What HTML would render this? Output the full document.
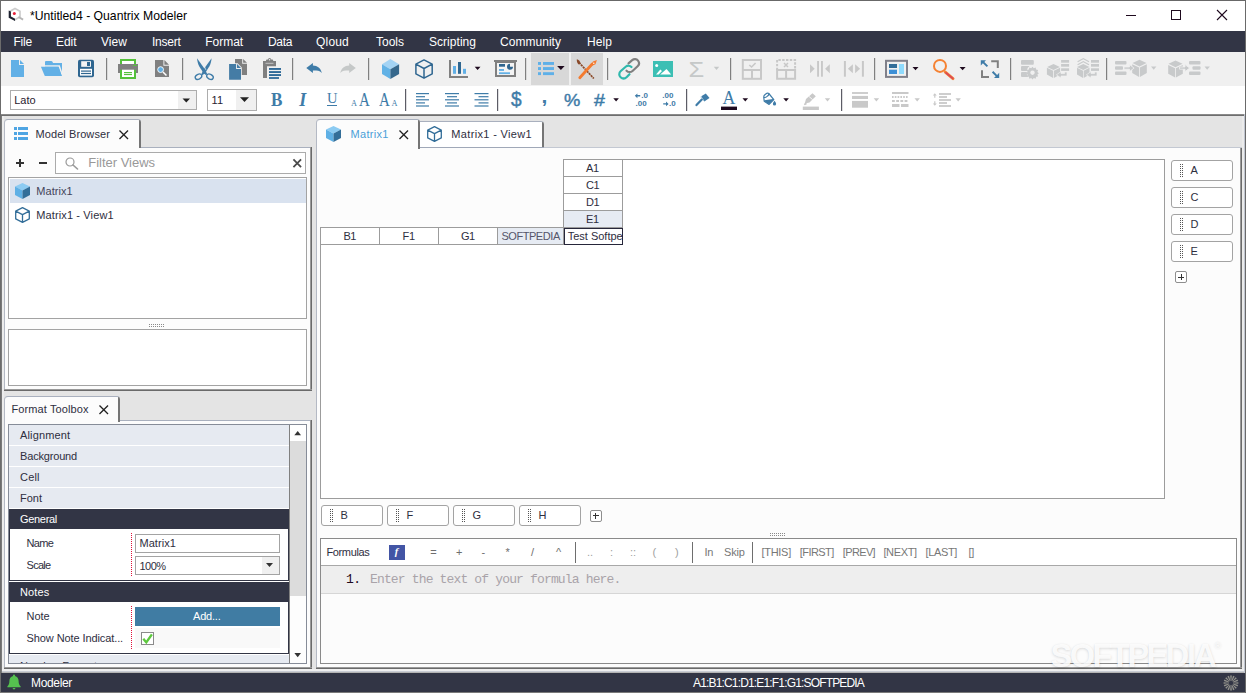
<!DOCTYPE html>
<html lang="en">
<head>
<meta charset="utf-8">
<title>*Untitled4 - Quantrix Modeler</title>
<style>
*{box-sizing:border-box;margin:0;padding:0}
html,body{width:1246px;height:693px;overflow:hidden;background:#e4e4e4}
body{position:relative;font-family:"Liberation Sans",sans-serif;font-size:11px;color:#2e2e3e}
.a{position:absolute}
.t{position:absolute;white-space:nowrap}
svg{position:absolute;overflow:visible}
</style>
</head>
<body>

<div class="a" style="left:0px;top:0px;width:1246px;height:31px;background:#fff;"></div>
<div class="a" style="left:0px;top:31px;width:1246px;height:21px;background:#323545;"></div>
<div class="a" style="left:0px;top:52px;width:1246px;height:34px;background:#f0f0f0;"></div>
<div class="a" style="left:0px;top:86px;width:1246px;height:28px;background:#fff;"></div>
<div class="a" style="left:0px;top:114px;width:1246px;height:1px;background:#8a8a8a;"></div>
<div class="a" style="left:0px;top:115px;width:1246px;height:1px;background:#6e6e6e;"></div>
<div class="a" style="left:0px;top:669px;width:1246px;height:2px;background:#efefef;"></div>
<div class="a" style="left:0px;top:671px;width:1246px;height:1px;background:#c8ccd4;"></div>
<div class="a" style="left:0px;top:672px;width:1246px;height:1px;background:#b4b4b4;"></div>
<div class="a" style="left:0px;top:673px;width:1246px;height:20px;background:#323545;"></div>
<div class="a" style="left:1px;top:116px;width:1px;height:557px;background:#7a7a7a;"></div>
<div class="a" style="left:2px;top:116px;width:2px;height:553px;background:#ececec;"></div>
<div class="a" style="left:1242px;top:116px;width:2px;height:553px;background:#ebebeb;"></div>
<div class="a" style="left:1244px;top:114px;width:1px;height:559px;background:#c0c5d0;"></div>
<div class="t" style="letter-spacing:-0.005px;left:30px;top:8.77px;font-size:12.2px;color:#000;line-height:14px;height:14px;">*Untitled4 - Quantrix Modeler</div>
<div class="t" style="letter-spacing:-0.211px;left:13.5px;top:34.84px;font-size:12px;color:#fff;line-height:14px;height:14px;">File</div>
<div class="t" style="letter-spacing:-0.047px;left:56px;top:34.84px;font-size:12px;color:#fff;line-height:14px;height:14px;">Edit</div>
<div class="t" style="letter-spacing:0.051px;left:101px;top:34.84px;font-size:12px;color:#fff;line-height:14px;height:14px;">View</div>
<div class="t" style="letter-spacing:-0.253px;left:152px;top:34.84px;font-size:12px;color:#fff;line-height:14px;height:14px;">Insert</div>
<div class="t" style="letter-spacing:-0.019px;left:205.3px;top:34.84px;font-size:12px;color:#fff;line-height:14px;height:14px;">Format</div>
<div class="t" style="letter-spacing:-0.340px;left:268px;top:34.84px;font-size:12px;color:#fff;line-height:14px;height:14px;">Data</div>
<div class="t" style="letter-spacing:0.194px;left:316px;top:34.84px;font-size:12px;color:#fff;line-height:14px;height:14px;">Qloud</div>
<div class="t" style="letter-spacing:-0.003px;left:376px;top:34.84px;font-size:12px;color:#fff;line-height:14px;height:14px;">Tools</div>
<div class="t" style="letter-spacing:0.035px;left:429px;top:34.84px;font-size:12px;color:#fff;line-height:14px;height:14px;">Scripting</div>
<div class="t" style="letter-spacing:0.035px;left:500px;top:34.84px;font-size:12px;color:#fff;line-height:14px;height:14px;">Community</div>
<div class="t" style="letter-spacing:0.078px;left:587px;top:34.84px;font-size:12px;color:#fff;line-height:14px;height:14px;">Help</div>
<div class="t" style="letter-spacing:-0.337px;left:31px;top:676.14px;font-size:12px;color:#fff;line-height:14px;height:14px;">Modeler</div>
<div class="t" style="letter-spacing:-0.836px;left:693px;top:676.14px;font-size:12px;color:#fff;line-height:14px;height:14px;">A1:B1:C1:D1:E1:F1:G1:SOFTPEDIA</div>
<svg class="a" id="tbsvg" style="left:0;top:0" width="1246" height="120" viewBox="0 0 1246 120">
<g fill="#808080">
<rect x="106" y="58" width="1.200" height="22"/><rect x="182" y="58" width="1.200" height="22"/><rect x="292" y="58" width="1.200" height="22"/><rect x="368" y="58" width="1.200" height="22"/><rect x="525" y="58" width="1.200" height="22"/><rect x="607" y="58" width="1.200" height="22"/><rect x="730" y="58" width="1.200" height="22"/><rect x="874" y="58" width="1.200" height="22"/><rect x="1010" y="58" width="1.200" height="22"/><rect x="1106" y="58" width="1.200" height="22"/>
</g>
<g fill="#5c5c66"><rect x="405" y="89" width="1.200" height="22"/><rect x="497" y="89" width="1.200" height="22"/><rect x="686" y="89" width="1.200" height="22"/><rect x="841" y="89" width="1.200" height="22"/></g>
<!-- highlighted buttons -->
<rect x="531" y="53" width="38" height="32" fill="#d8d8d8"/>
<rect x="571" y="53" width="32" height="32" fill="#d8d8d8"/>
<!-- new -->
<path d="M11 60h8v5h5v12h-13z" fill="#62b0e6"/><path d="M20 60l4 4h-4z" fill="#62b0e6"/>
<!-- open -->
<path d="M45 62a1 1 0 0 1 1-1h5.200a1.500 1.500 0 0 1 1.300.800l.500 1.200h9v13h-17z" fill="#62b0e6"/>
<path d="M44 66h15.200l3.400 10" fill="none" stroke="#f0f0f0" stroke-width="1.600"/>
<path d="M40.900 66.800h17.600l3.300 9.200h-17z" fill="#62b0e6"/>
<!-- save -->
<rect x="78" y="59.800" width="16" height="17.500" rx="1.800" fill="#2f6690"/>
<rect x="81.200" y="61.200" width="9.800" height="5.600" fill="#f4f4f4"/><rect x="87" y="62" width="3" height="4" fill="#2f6690"/>
<rect x="80" y="68.800" width="12" height="6.800" fill="#fff"/><rect x="81" y="70.500" width="10" height="1.200" fill="#2f6690"/><rect x="81" y="72.900" width="10" height="1.200" fill="#2f6690"/>
<!-- print -->
<rect x="121" y="60" width="14" height="18" fill="#fff" stroke="#55c23c" stroke-width="2"/>
<rect x="118" y="64" width="20" height="9" fill="#808080"/>
<rect x="122" y="69.700" width="12" height="7.300" fill="#fff"/><rect x="120" y="69.700" width="2" height="4" fill="#55c23c"/><rect x="134" y="69.700" width="2" height="4" fill="#55c23c"/>
<rect x="124" y="72" width="8" height="1.200" fill="#55c23c"/><rect x="124" y="74" width="8" height="1.100" fill="#55c23c"/><rect x="133" y="65" width="4" height="1" fill="#55c23c"/>
<!-- preview -->
<path d="M155 60h8.400v5.800h5.600v11.200h-14z" fill="#808080"/><path d="M164.400 60l4.600 4.800h-4.600z" fill="#808080"/>
<circle cx="160.600" cy="69.600" r="2.900" fill="#62b0e6" stroke="#fff" stroke-width=".900"/><path d="M163 72l3.500 3.500" stroke="#fff" stroke-width="1.500"/>
<!-- cut -->
<g fill="none" stroke="#3f7ca8" stroke-width="1.300"><ellipse cx="198.500" cy="76.700" rx="3.500" ry="2.400" transform="rotate(-28 198.500 76.700)"/><ellipse cx="210" cy="76.700" rx="3.500" ry="2.400" transform="rotate(28 210 76.700)"/></g>
<path d="M197 58.300c.300 3 1 5.500 2 7.700l4.600 7.300 2.600 1.900 1-1.300-2.300-4.700z" fill="#3f7ca8"/>
<path d="M211.600 58.300c-.300 3-1 5.500-2 7.700l-4.600 7.300-2.600 1.900-1-1.300 2.300-4.700z" fill="#3f7ca8"/>
<path d="M204.300 66.300l1.600 3.600" stroke="#f0f0f0" stroke-width=".700"/>
<!-- copy -->
<path d="M235 59h7.200v4.700h4.800v11.300h-12z" fill="#808080"/><path d="M243.100 59l3.900 3.800h-3.900z" fill="#808080"/>
<path d="M228.300 63.200h9.300l4.200 4.200v13.200h-13.500z" fill="#f0f0f0"/>
<path d="M229.100 64h7v5h4.900v10.800h-11.900z" fill="#447ca5"/><path d="M237 64l4 4h-4z" fill="#447ca5"/>
<!-- paste -->
<path d="M263 61h13v5.200h-9v11.800h-4z" fill="#808080"/><path d="M266 62.500v-2a1 1 0 0 1 1-1h1a1.600 1.600 0 0 1 3.200 0h1a1 1 0 0 1 1 1v2z" fill="#808080"/><circle cx="269.600" cy="59.700" r=".800" fill="#f0f0f0"/><rect x="265.500" y="62.800" width="8" height="1" fill="#c4c4c4"/>
<g fill="#2f6a98"><rect x="269" y="68" width="12" height="1.900"/><rect x="269" y="71.100" width="12" height="1.900"/><rect x="269" y="74.100" width="12" height="1.900"/><rect x="269" y="77.100" width="10" height="1.800"/></g>
<!-- undo / redo -->
<path d="M306.300 68l6.600-5v2.600c4.600 0 7.900 2.900 8.900 7.300-2.300-2.600-5-2.500-8.900-2.500v2.700z" fill="#3f7ca8"/>
<path d="M355.800 68l-6.600-5v2.600c-4.600 0-7.900 2.900-8.900 7.300 2.300-2.600 5-2.500 8.900-2.500v2.700z" fill="#c5c8c8"/>
<!-- cube solid -->
<path d="M390.400 59l8.700 5.300-8.700 5-8.400-5z" fill="#a3d3f4"/><path d="M382 64.300l8.400 4.900v9.800l-8.400-5z" fill="#62b2e6"/><path d="M399.100 64.300l-8.700 4.900v9.800l8.700-5z" fill="#36688c"/>
<!-- cube outline -->
<path d="M424 59.900l8.200 4.300v9.600l-8.200 4.400-8.100-4.400v-9.600zM415.900 64.200l8.100 4.300 8.200-4.300M424 68.500v9.700" fill="none" stroke="#2f6690" stroke-width="1.500" stroke-linejoin="round"/>
<!-- chart -->
<path d="M450 60v16.900h18" fill="none" stroke="#808080" stroke-width="2"/><rect x="453" y="66" width="3" height="7.800" fill="#62b0e6"/><rect x="458" y="62" width="3" height="11.800" fill="#2f6690"/><rect x="463" y="68.800" width="3" height="5" fill="#62b0e6"/>
<path d="M474.700 66.700h5.800l-2.900 3.300z" fill="#1e0a1e"/>
<!-- dashboard -->
<rect x="494" y="60" width="23" height="2" fill="#808080"/><rect x="496" y="62" width="19" height="14" fill="#f4f4f4" stroke="#808080" stroke-width="2"/>
<rect x="499" y="64" width="6" height="2.700" fill="#2f6690"/><rect x="499" y="69" width="5" height="1.900" fill="#62b0e6"/><rect x="499" y="72.300" width="11" height="1.800" fill="#62b0e6"/>
<path d="M510 66.700v-3a3 3 0 1 0 3 3z" fill="#2f6690"/><path d="M510.800 65.900v-2.200a2.400 2.400 0 0 1 2.200 2.200z" fill="#2f6690" opacity="0"/>
<!-- list -->
<g fill="#5fb0e8"><rect x="538" y="62" width="3" height="2.900"/><rect x="538" y="67.100" width="3" height="2.900"/><rect x="538" y="72.200" width="3" height="2.900"/><rect x="543" y="62" width="11" height="2.900"/><rect x="543" y="67.100" width="11" height="2.900"/><rect x="543" y="72.200" width="11" height="2.900"/></g>
<path d="M557.100 66h7.500l-3.750 4z" fill="#1e0a1e"/>
<!-- brushes -->
<path d="M579 62.500l14.800 16" stroke="#8a4a2a" stroke-width="1.700" stroke-dasharray="2.200 .700"/><path d="M576.800 59.200c1.800.300 3.400 1.800 3.600 3.900l-1.700 1.500c-1.500-1.200-2.100-3.200-1.900-5.400z" fill="#8a4a2a"/>
<path d="M579.800 77.800l12.400-13.800" stroke="#f47b30" stroke-width="2.800" stroke-linecap="round"/><path d="M591.500 64.500l1.400-3 4-1.500-1.400 4.200-2.800 1.400z" fill="#f47b30"/><circle cx="593.800" cy="63.300" r=".700" fill="#fff"/>
<!-- link -->
<g fill="none" stroke-width="2.200" stroke-linecap="round">
<path d="M631.500 67C630 65.500 627.500 65.300 626 66.500L620.800 71C618.800 72.800 618.800 75.600 620.600 77.200C622.400 78.800 625 78.700 626.800 77L629.500 74.200" stroke="#2fb8ad"/>
<path d="M628.500 63.300L632.200 60.200C634 58.700 636.600 58.900 638 60.600C639.400 62.400 639.200 64.800 637.600 66.300L632.500 71C630.800 72.500 628.200 72.300 626.500 70.700" stroke="#808080"/>
</g>
<!-- image -->
<rect x="653" y="61" width="20" height="16" fill="#3cbfb4"/><circle cx="656.700" cy="65.600" r="1.500" fill="#fff"/><path d="M656 74.600l4.300-5 1.700 1.400-3.400 3.600zM660.200 74.600l6.300-5.500 4.700 5.500z" fill="#fff"/>
<!-- sigma (text) -->
<text x="0" y="77" transform="translate(688.600 0) scale(1.130 1)" font-family="Liberation Sans,sans-serif" font-size="22.500" fill="#c5c8c8">Σ</text>
<path d="M713.800 66.800h5.400l-2.700 3.200z" fill="#c5c8c8"/>
<!-- grid1 -->
<g fill="none" stroke="#c8c8c8" stroke-width="2"><rect x="742.800" y="60" width="18.200" height="18.800"/><path d="M742.800 70.100h18.200M752 70.100v8.700"/><path d="M749.300 65l2.300 2 4-4" stroke-width="1.600"/></g>
<!-- grid2 -->
<g fill="none" stroke="#c8c8c8" stroke-width="2"><path d="M777.100 70.100h18v8.700h-18zM786.100 70.100v8.700"/><path d="M777.100 70.100v-10.100h18v10.100" stroke-dasharray="2.400 1.400"/><path d="M784 63l4 4M788 63l-4 4" stroke-width="1.500"/></g>
<!-- arrows 1 -->
<g fill="#c8c8c8"><path d="M810 64.300l4.700 4.500-4.700 4.500z"/><rect x="817.100" y="61" width="1.900" height="15.700"/><rect x="821" y="61" width="1.900" height="15.700"/><path d="M829.800 64.300l-4.700 4.500 4.700 4.500z"/></g>
<!-- arrows 2 -->
<g fill="#c8c8c8"><rect x="843.900" y="61" width="2" height="15.700"/><path d="M852.900 64.300l-5 4.500 5 4.500z"/><path d="M855.100 64.300l5 4.500-5 4.500z"/><rect x="861.900" y="61" width="2" height="15.700"/></g>
<!-- layout -->
<rect x="886" y="60.800" width="21" height="16.100" fill="#f0f0f0" stroke="#80808a" stroke-width="2"/><rect x="889" y="64" width="8" height="4" fill="#336e99"/><rect x="889" y="69.700" width="8" height="4.300" fill="#3d8fd6"/><rect x="899" y="64" width="5" height="10" fill="#8fdafc"/>
<path d="M912.500 66.900h6l-3 3.400z" fill="#1e0a1e"/>
<!-- search -->
<circle cx="940" cy="65.900" r="6" fill="none" stroke="#f58233" stroke-width="2"/><path d="M945.300 72.200l7.700 6.400" stroke="#f58233" stroke-width="3" stroke-linecap="round"/><path d="M946 72.800l6.800 5.600" stroke="#d9465a" stroke-width="1.500" stroke-linecap="round"/>
<path d="M959.600 66.900h6l-3 3.400z" fill="#1e0a1e"/>
<!-- fullscreen -->
<g fill="none" stroke="#808080" stroke-width="2"><path d="M991.200 61.200h6.600v6.800M982 70.300v6.700h7"/></g>
<g fill="#3f7ca8"><path d="M980.800 60.200h5.200l-1.700 1.700 3.800 3.800-1.400 1.400-3.800-3.800-2.100 2.100z"/><path d="M999.200 78h-5.200l1.700-1.700-3.800-3.800 1.400-1.400 3.800 3.800 2.100-2.100z"/></g>
<!-- disabled icons -->
<g fill="#c8cacb">
<rect x="1021" y="60" width="12.800" height="4.700" rx="1"/><path d="M1021 67a1 1 0 0 1 1-1h7.500a6.500 6.500 0 0 0-2.700 4.900h-4.800a1 1 0 0 1-1-1zM1021 73a1 1 0 0 1 1-1h4.800a6.500 6.500 0 0 0 1.300 4.900h-6.100a1 1 0 0 1-1-1z"/>
<path d="M1032.500 66.800l1.300 1.500 1.900-.700.400 2 2 .400-.700 1.900 1.500 1.300-1.500 1.300.700 1.900-2 .400-.400 2-1.900-.700-1.300 1.500-1.300-1.500-1.900.700-.400-2-2-.400.700-1.900-1.500-1.300 1.500-1.300-.700-1.900 2-.400.400-2 1.900.700zM1032.500 70.500a2.200 2.200 0 1 0 .001 0z" fill-rule="evenodd"/>
<path d="M1053.500 64l6.300 3-6.300 3-6.300-3zM1046.900 67.800l6.200 3v7.200l-6.200-3.400zM1060.100 67.800l-6.200 3v7.200l6.200-3.400z"/><rect x="1061.100" y="60" width="8" height="2.700"/><rect x="1061.100" y="64" width="8" height="2.700"/><rect x="1061.100" y="68.300" width="8" height="2.600"/><path d="M1067 72v4h-6v2l-4.600-3.200 4.600-3.200v2h3.600v-1.600z" stroke="#f0f0f0" stroke-width=".700"/>
<path d="M1083.300 64l6.100 3-6.100 3-6.300-3zM1077 67.800l6 3v7.200l-6-3.400zM1089.500 67.800l-5.800 3v7.200l5.800-3.400z"/><path d="M1083.300 58l6 3.300-.600.900-5.400-2.900-5.400 2.900-.600-.900zM1083.300 61l6 3.300-.600.900-5.400-2.900-5.400 2.900-.600-.900z"/><rect x="1091" y="60" width="8" height="2.700"/><rect x="1091" y="64" width="8" height="2.700"/><rect x="1091" y="68.300" width="8" height="2.600"/><path d="M1097 72v4h-6v2l-4.600-3.200 4.600-3.200v2h3.600v-1.600z" stroke="#f0f0f0" stroke-width=".700"/>
<rect x="1115" y="61" width="11.500" height="3.500" rx="1"/><rect x="1115" y="66.300" width="8" height="3.500" rx="1"/><rect x="1115" y="71.600" width="11.500" height="3.500" rx="1"/>
<path d="M1139.500 59.800l7 3.300-7 3.400-7-3.400zM1132.200 64.200l6.900 3.300v9.400l-6.900-3.900zM1146.800 64.200l-6.900 3.300v9.400l6.900-3.900z"/>
<path d="M1124 67h5.500v-2.400l4.600 3.500-4.600 3.500v-2.400h-5.500z" stroke="#f0f0f0" stroke-width=".800"/>
<path d="M1175.500 60.500l7 3.300-7 3.400-7-3.400zM1168.200 64.900l6.900 3.300v9.400l-6.900-3.900zM1182.800 64.900l-6.900 3.300v9.400l6.900-3.900z"/>
<rect x="1189" y="61" width="11.500" height="3.500" rx="1"/><rect x="1192.500" y="66.300" width="8" height="3.500" rx="1"/><rect x="1189" y="71.600" width="11.500" height="3.500" rx="1"/>
<path d="M1179.500 67h5.500v-2.400l4.600 3.500-4.600 3.500v-2.400h-5.500z" stroke="#f0f0f0" stroke-width=".800"/>
<path d="M1151 66.500h5.400l-2.700 3.200z"/><path d="M1204.500 66.500h5.400l-2.700 3.200z"/>
</g>
</svg>

<!-- ===== toolbar row 2 ===== -->
<div class="a" style="left:10px;top:90px;width:187px;height:20px;border:1px solid #adadad;background:#fff"></div>
<div class="a" style="left:178px;top:91px;width:18px;height:18px;background:#f0f0f0"></div>
<div class="t" style="left:14.2px;top:94.2px;font-family:'Liberation Sans',sans-serif;font-size:11px;line-height:13px;height:13px;font-weight:normal;font-style:normal;color:#2a2230;">Lato</div>
<div class="a" style="left:207px;top:89px;width:50px;height:22px;border:1px solid #adadad;background:#fff"></div>
<div class="a" style="left:236px;top:90px;width:20px;height:20px;background:#f0f0f0"></div>
<div class="t" style="left:211.6px;top:94.2px;font-family:'Liberation Sans',sans-serif;font-size:11px;line-height:13px;height:13px;font-weight:normal;font-style:normal;color:#2a2230;">11</div>
<div class="t" style="left:270.7px;top:88.92px;font-family:'Liberation Serif',serif;font-size:18px;line-height:22px;height:22px;font-weight:bold;font-style:normal;color:#3f7ca8;transform:scaleX(0.95);transform-origin:0 50%;">B</div>
<div class="t" style="left:299.3px;top:88.92px;font-family:'Liberation Serif',serif;font-size:18px;line-height:22px;height:22px;font-weight:bold;font-style:italic;color:#3f7ca8;transform:scaleX(1);transform-origin:0 50%;">I</div>
<div class="t" style="left:326.8px;top:89.84px;font-family:'Liberation Serif',serif;font-size:13.8px;line-height:17px;height:17px;font-weight:normal;font-style:normal;color:#3f7ca8;transform:scaleX(1.05);transform-origin:0 50%;">U</div>
<div class="a" style="left:327px;top:104.700px;width:10.300px;height:1.200px;background:#3f7ca8"></div>
<div class="t" style="left:351px;top:98.80px;font-family:'Liberation Serif',serif;font-size:8.3px;line-height:10px;height:10px;font-weight:normal;font-style:normal;color:#3f7ca8;">A</div>
<div class="t" style="left:358.6px;top:89.69px;font-family:'Liberation Serif',serif;font-size:17.8px;line-height:21px;height:21px;font-weight:normal;font-style:normal;color:#3f7ca8;transform:scaleX(0.84);transform-origin:0 50%;">A</div>
<div class="t" style="left:378.9px;top:89.69px;font-family:'Liberation Serif',serif;font-size:17.8px;line-height:21px;height:21px;font-weight:normal;font-style:normal;color:#3f7ca8;transform:scaleX(0.84);transform-origin:0 50%;">A</div>
<div class="t" style="left:391.6px;top:98.80px;font-family:'Liberation Serif',serif;font-size:8.3px;line-height:10px;height:10px;font-weight:normal;font-style:normal;color:#3f7ca8;">A</div>
<div class="t" style="left:510.6px;top:85.70px;font-family:'Liberation Sans',sans-serif;font-size:20.5px;line-height:25px;height:25px;font-weight:normal;font-style:normal;color:#3f7ca8;transform:scaleX(0.93);transform-origin:0 50%;-webkit-text-stroke:.450px #3f7ca8;">$</div>
<div class="t" style="left:541.6px;top:82.82px;font-family:'Liberation Sans',sans-serif;font-size:21px;line-height:25px;height:25px;font-weight:bold;font-style:normal;color:#3f7ca8;">,</div>
<div class="t" style="left:563.6px;top:90.71px;font-family:'Liberation Sans',sans-serif;font-size:17px;line-height:20px;height:20px;font-weight:normal;font-style:normal;color:#3f7ca8;transform:scaleX(1.08);transform-origin:0 50%;-webkit-text-stroke:.450px #3f7ca8;">%</div>
<div class="t" style="left:594.3px;top:90.71px;font-family:'Liberation Sans',sans-serif;font-size:17px;line-height:20px;height:20px;font-weight:normal;font-style:normal;color:#3f7ca8;transform:scaleX(1.15);transform-origin:0 50%;-webkit-text-stroke:.450px #3f7ca8;">#</div>
<div class="t" style="left:641.3px;top:90.53px;font-family:'Liberation Sans',sans-serif;font-size:8px;line-height:10px;height:10px;font-weight:bold;font-style:normal;color:#3f7ca8;">.0</div>
<div class="t" style="left:635.5px;top:99.43px;font-family:'Liberation Sans',sans-serif;font-size:8px;line-height:10px;height:10px;font-weight:bold;font-style:normal;color:#3f7ca8;">.00</div>
<div class="t" style="left:662.3px;top:90.53px;font-family:'Liberation Sans',sans-serif;font-size:8px;line-height:10px;height:10px;font-weight:bold;font-style:normal;color:#3f7ca8;">.00</div>
<div class="t" style="left:669px;top:99.43px;font-family:'Liberation Sans',sans-serif;font-size:8px;line-height:10px;height:10px;font-weight:bold;font-style:normal;color:#3f7ca8;">.0</div>
<div class="t" style="left:722.6px;top:88.49px;font-family:'Liberation Serif',serif;font-size:17.8px;line-height:21px;height:21px;font-weight:normal;font-style:normal;color:#3f7ca8;">A</div>
<svg class="a" style="left:0;top:0" width="1246" height="120" viewBox="0 0 1246 120">
<path d="M182.500 98.500h7.500l-3.750 4z" fill="#222"/>
<path d="M240 97.200h9l-4.500 4.800z" fill="#222"/>
<g fill="#3f7ca8">
<rect x="416" y="93" width="13" height="1.200"/><rect x="416" y="96.100" width="9" height="1.200"/><rect x="416" y="99.200" width="13" height="1.200"/><rect x="416" y="102.300" width="9" height="1.200"/><rect x="416" y="105.400" width="13" height="1.200"/>
<rect x="445" y="93" width="14" height="1.200"/><rect x="447" y="96.100" width="10" height="1.200"/><rect x="445" y="99.200" width="14" height="1.200"/><rect x="447" y="102.300" width="10" height="1.200"/><rect x="445" y="105.400" width="14" height="1.200"/>
<rect x="474.500" y="93" width="14" height="1.200"/><rect x="478.500" y="96.100" width="10" height="1.200"/><rect x="474.500" y="99.200" width="14" height="1.200"/><rect x="478.500" y="102.300" width="10" height="1.200"/><rect x="474.500" y="105.400" width="14" height="1.200"/>
<path d="M634.800 95.800l2.600-2.400v1.700h2.800v1.400h-2.800v1.700z"/><path d="M668.600 103.900l-2.600-2.400v1.700h-2.800v1.400h2.800v1.700z"/>
</g>
<path d="M613.300 98.200h5.600l-2.800 3.200z" fill="#1e0a1e"/><path d="M742.500 98.200h5.600l-2.800 3.200z" fill="#1e0a1e"/><path d="M783.300 98.200h5.600l-2.800 3.200z" fill="#1e0a1e"/>
<!-- format painter brush -->
<path d="M701.300 96.300l4.500-2.900 3.700 4.500-5.200 3.700z" fill="#3f7ca8"/><path d="M700.700 96.800l3.300 4.100" stroke="#9dbfd8" stroke-width=".900"/><path d="M701.800 99.600l-5.300 5.500" stroke="#3f7ca8" stroke-width="2.200" stroke-linecap="round"/>
<!-- A colour bar -->
<rect x="721" y="106.600" width="16" height="3.400" fill="#1e0a1e"/>
<!-- bucket -->
<path d="M763.800 97.400l5-3.900 5 6.200-4.700 4.700-4.900-3.200z" fill="#fff" stroke="#3f7ca8" stroke-width="1.200" stroke-linejoin="round"/><path d="M764.300 100.300l8.800-1.200.5.700-4.500 4.500-4.800-3.100z" fill="#3f7ca8"/><ellipse cx="766.300" cy="95.300" rx="2.900" ry="1.400" transform="rotate(-38 766.300 95.300)" fill="#fff" stroke="#3f7ca8" stroke-width="1.100"/>
<path d="M774.500 100.800c1 1.500 1.600 2.400 1.600 3.200a1.600 1.600 0 0 1-3.200 0c0-.8.600-1.700 1.600-3.200z" fill="#3f7ca8"/>
<!-- pen disabled -->
<g fill="#c9c9c9"><path d="M812.500 93.200l3.300 3-6.300 6.200-4.800 1.200 1.300-4.500z"/><path d="M805.300 102.300l1.800 1.600-2.300 1.400-.9-.800z"/><rect x="802.800" y="106.600" width="16.100" height="3.400"/><path d="M824.800 98.200h5.400l-2.700 3.200z"/>
<rect x="852" y="92.100" width="16" height="1.800"/><rect x="852" y="95.900" width="16" height="3.100"/><rect x="852" y="100.900" width="16" height="6.800"/><path d="M873.700 98.200h5.400l-2.700 3.200z"/>
<rect x="892" y="92" width="16.500" height="2"/><path d="M914.500 98.200h5.400l-2.700 3.200z"/>
<rect x="939" y="93.100" width="12" height="1.800"/><rect x="939" y="96.100" width="8" height="1.800"/><rect x="939" y="99.100" width="12" height="1.800"/><rect x="939" y="102.100" width="8" height="1.800"/><rect x="939" y="105.100" width="12" height="1.800"/>
<path d="M934.800 93.200l2 2.400h-1.400v2.200h-1.200v-2.200h-1.400zM934.800 105.800l2-2.400h-1.400v-2.200h-1.200v2.200h-1.400z"/><path d="M955.500 98.200h5.400l-2.700 3.200z"/>
</g>
<path d="M809 96.500l3.500 3" stroke="#fff" stroke-width=".8"/>
<g stroke="#c9c9c9" fill="none"><path d="M892 97h16.500" stroke-width="2" stroke-dasharray="1.600 1.200"/><path d="M892 101h16.500" stroke-width="2" stroke-dasharray="2.800 1.400"/><path d="M892 105.500h16.500" stroke-width="3" stroke-dasharray="7.500 1.500"/></g>
</svg>

<div class="a" style="left:4px;top:147px;width:308px;height:244px;background:#fcfcfc;"></div>
<div class="a" style="left:4px;top:147px;width:308px;height:1px;background:#a9b0be;"></div>
<div class="a" style="left:4px;top:147px;width:1px;height:244px;background:#b4b9c4;"></div>
<div class="a" style="left:310px;top:147px;width:1px;height:244px;background:#9a9a9a;"></div>
<div class="a" style="left:311px;top:147px;width:1px;height:244px;background:#6a6a6a;"></div>
<div class="a" style="left:4px;top:389px;width:308px;height:1px;background:#9a9a9a;"></div>
<div class="a" style="left:4px;top:390px;width:308px;height:1px;background:#6a6a6a;"></div>
<div class="a" style="left:4px;top:119px;width:137px;height:29px;background:#fcfcfc;border-top:1px solid #a9b0be;border-left:1px solid #b4b9c4;border-radius:4px 3px 0 0;"></div>
<div class="a" style="left:139px;top:120px;width:2px;height:28px;background:#757575;border-radius:0 2px 0 0;"></div>
<div class="a" style="left:14px;top:127px;width:3px;height:3px;background:#4fa5e3;"></div>
<div class="a" style="left:18px;top:127px;width:10px;height:3px;background:#4fa5e3;"></div>
<div class="a" style="left:14px;top:132px;width:3px;height:3px;background:#4fa5e3;"></div>
<div class="a" style="left:18px;top:132px;width:10px;height:3px;background:#4fa5e3;"></div>
<div class="a" style="left:14px;top:137px;width:3px;height:3px;background:#4fa5e3;"></div>
<div class="a" style="left:18px;top:137px;width:10px;height:3px;background:#4fa5e3;"></div>
<div class="t" style="letter-spacing:0.080px;left:35.5px;top:127.19px;font-size:11px;color:#2e2e3e;line-height:14px;height:14px;">Model Browser</div>
<svg style="left:119px;top:130px" width="9.5" height="9.5" viewBox="0 0 10 10"><path d="M0.500 0.500l9 9M9.500 0.500l-9 9" stroke="#222" stroke-width="1.36842" fill="none"/></svg>
<div class="a" style="left:16px;top:162px;width:8px;height:1.6px;background:#333;"></div>
<div class="a" style="left:19.2px;top:158.8px;width:1.6px;height:8px;background:#333;"></div>
<div class="a" style="left:39px;top:162px;width:8px;height:1.6px;background:#333;"></div>
<div class="a" style="left:55px;top:152px;width:251px;height:22px;background:#fff;border:1px solid #ababab;"></div>
<svg style="left:65px;top:157px" width="14" height="13" viewBox="0 0 14 13"><circle cx="5" cy="5" r="4" fill="none" stroke="#9a9a9a" stroke-width="1.200"/><path d="M8 8l4.500 4" stroke="#9a9a9a" stroke-width="1.600" stroke-linecap="round"/></svg>
<div class="t" style="letter-spacing:-0.021px;left:88.3px;top:156.00px;font-size:13px;color:#999;line-height:14px;height:14px;">Filter Views</div>
<svg style="left:292.5px;top:159px" width="8.5" height="8.5" viewBox="0 0 10 10"><path d="M0.500 0.500l9 9M9.500 0.500l-9 9" stroke="#4a4a4a" stroke-width="2.11765" fill="none"/></svg>
<div class="a" style="left:8px;top:177px;width:299px;height:142px;background:#fff;border:1px solid #a3a3a3;"></div>
<div class="a" style="left:10px;top:179px;width:296px;height:23.5px;background:#d9e2ef;"></div>
<svg style="left:14.5px;top:183px" width="15" height="16" viewBox="0 0 15 16"><path d="M7.500 0l7.500 3.600-7.500 3.800-7.500-3.800z" fill="#8ccbf2"/><path d="M0 3.600l7.500 3.800v8.600l-7.500-4z" fill="#5fb0e5"/><path d="M15 3.600l-7.500 3.800v8.600l7.500-4z" fill="#336e99"/></svg>
<div class="t" style="letter-spacing:0.062px;left:36.3px;top:184.19px;font-size:11px;color:#44445a;line-height:14px;height:14px;">Matrix1</div>
<svg style="left:14.5px;top:207px" width="15" height="16" viewBox="0 0 15 16"><path d="M7.500 .700l6.800 3.400v7.800l-6.800 3.400-6.800-3.400v-7.800zM.700 4.100l6.800 3.500 6.800-3.500M7.500 7.600v7.700" fill="none" stroke="#336e99" stroke-width="1.300" stroke-linejoin="round"/></svg>
<div class="t" style="letter-spacing:0.119px;left:36.3px;top:208.19px;font-size:11px;color:#2e2e3e;line-height:14px;height:14px;">Matrix1 - View1</div>
<div class="a" style="left:149px;top:324px;width:16px;height:1px;background:repeating-linear-gradient(90deg,#8a8a8a 0 1px,transparent 1px 2px)"></div>
<div class="a" style="left:149px;top:326px;width:16px;height:1px;background:repeating-linear-gradient(90deg,#8a8a8a 0 1px,transparent 1px 2px)"></div>
<div class="a" style="left:8px;top:329px;width:299px;height:57px;background:#fff;border:1px solid #a3a3a3;"></div>
<div class="a" style="left:4px;top:420px;width:308px;height:249px;background:#fcfcfc;"></div>
<div class="a" style="left:4px;top:420px;width:308px;height:1px;background:#a9b0be;"></div>
<div class="a" style="left:4px;top:420px;width:1px;height:249px;background:#b4b9c4;"></div>
<div class="a" style="left:310px;top:420px;width:1px;height:249px;background:#9a9a9a;"></div>
<div class="a" style="left:311px;top:420px;width:1px;height:249px;background:#6a6a6a;"></div>
<div class="a" style="left:4px;top:667px;width:308px;height:1px;background:#9a9a9a;"></div>
<div class="a" style="left:4px;top:668px;width:308px;height:1px;background:#6a6a6a;"></div>
<div class="a" style="left:4px;top:396px;width:116px;height:26px;background:#fcfcfc;border-top:1px solid #a9b0be;border-left:1px solid #b4b9c4;border-radius:4px 3px 0 0;"></div>
<div class="a" style="left:118px;top:397px;width:2px;height:25px;background:#757575;border-radius:0 2px 0 0;"></div>
<div class="t" style="letter-spacing:0.114px;left:11.4px;top:402.19px;font-size:11px;color:#2e2e3e;line-height:14px;height:14px;">Format Toolbox</div>
<svg style="left:98.5px;top:405px" width="9.5" height="9.5" viewBox="0 0 10 10"><path d="M0.500 0.500l9 9M9.500 0.500l-9 9" stroke="#222" stroke-width="1.36842" fill="none"/></svg>
<div class="a" style="left:8px;top:424px;width:299px;height:240px;background:#fff;border:1px solid #868c98;"></div>
<div class="a" style="left:9px;top:425px;width:280px;height:20px;background:#e6eaf1;"></div>
<div class="a" style="left:9px;top:445px;width:280px;height:1px;background:#fff;"></div>
<div class="a" style="left:9px;top:446px;width:280px;height:20px;background:#e6eaf1;"></div>
<div class="a" style="left:9px;top:466px;width:280px;height:1px;background:#fff;"></div>
<div class="a" style="left:9px;top:467px;width:280px;height:20px;background:#e6eaf1;"></div>
<div class="a" style="left:9px;top:487px;width:280px;height:1px;background:#fff;"></div>
<div class="a" style="left:9px;top:488px;width:280px;height:20px;background:#e6eaf1;"></div>
<div class="a" style="left:9px;top:508px;width:280px;height:1px;background:#fff;"></div>
<div class="t" style="letter-spacing:0.120px;left:20.1px;top:428.19px;font-size:11px;color:#2e2e3e;line-height:14px;height:14px;">Alignment</div>
<div class="t" style="letter-spacing:-0.182px;left:20.1px;top:449.19px;font-size:11px;color:#2e2e3e;line-height:14px;height:14px;">Background</div>
<div class="t" style="letter-spacing:0.112px;left:20.1px;top:470.19px;font-size:11px;color:#2e2e3e;line-height:14px;height:14px;">Cell</div>
<div class="t" style="letter-spacing:-0.029px;left:20.1px;top:491.19px;font-size:11px;color:#2e2e3e;line-height:14px;height:14px;">Font</div>
<div class="a" style="left:9px;top:509px;width:280px;height:20px;background:#323545;"></div>
<div class="t" style="letter-spacing:-0.306px;left:20px;top:512.19px;font-size:11px;color:#fff;line-height:14px;height:14px;">General</div>
<div class="a" style="left:9px;top:529px;width:280px;height:52px;background:#fff;border:1px solid #323545;border-top:none;"></div>
<div class="t" style="letter-spacing:-0.686px;left:26.6px;top:536.19px;font-size:11px;color:#2e2e3e;line-height:14px;height:14px;">Name</div>
<div class="t" style="letter-spacing:-0.746px;left:26.6px;top:558.19px;font-size:11px;color:#2e2e3e;line-height:14px;height:14px;">Scale</div>
<div class="a" style="left:131px;top:533px;width:1px;height:43px;background:repeating-linear-gradient(#e0103a 0 1px,transparent 1px 2px)"></div>
<div class="a" style="left:135px;top:534px;width:145px;height:19px;background:#fff;border:1px solid #a3a3a3;"></div>
<div class="t" style="letter-spacing:0.077px;left:139.4px;top:536.19px;font-size:11px;color:#2e2e3e;line-height:14px;height:14px;">Matrix1</div>
<div class="a" style="left:135px;top:556px;width:145px;height:19px;background:#fff;border:1px solid #a3a3a3;"></div>
<div class="a" style="left:262px;top:557px;width:17px;height:17px;background:#f0f0f0;"></div>
<div class="t" style="letter-spacing:-0.485px;left:139.4px;top:558.99px;font-size:11px;color:#2e2e3e;line-height:14px;height:14px;">100%</div>
<svg style="left:266px;top:563px" width="7" height="4" viewBox="0 0 7 4"><path d="M0 0h7l-3.500 4z" fill="#333"/></svg>
<div class="a" style="left:9px;top:582px;width:280px;height:20px;background:#323545;"></div>
<div class="t" style="letter-spacing:0.150px;left:20px;top:585.19px;font-size:11px;color:#fff;line-height:14px;height:14px;">Notes</div>
<div class="a" style="left:9px;top:602px;width:280px;height:52px;background:#fff;border:1px solid #323545;border-top:none;"></div>
<div class="t" style="letter-spacing:-0.062px;left:26.6px;top:609.19px;font-size:11px;color:#2e2e3e;line-height:14px;height:14px;">Note</div>
<div class="t" style="letter-spacing:-0.098px;left:26.6px;top:631.19px;font-size:11px;color:#2e2e3e;line-height:14px;height:14px;">Show Note Indicat...</div>
<div class="a" style="left:131px;top:606px;width:1px;height:43px;background:repeating-linear-gradient(#e0103a 0 1px,transparent 1px 2px)"></div>
<div class="a" style="left:135px;top:607px;width:145px;height:19px;background:#407ca3;"></div>
<div class="t" style="letter-spacing:-0.208px;left:193px;top:609.19px;font-size:11px;color:#fff;line-height:14px;height:14px;">Add...</div>
<div class="a" style="left:135px;top:628px;width:145px;height:20px;background:#f9f9f9;"></div>
<div class="a" style="left:141px;top:632px;width:13px;height:13px;background:#fff;border:1px solid #8a8a8a;"></div>
<svg style="left:141px;top:632px" width="13" height="13" viewBox="0 0 13 13"><path d="M2.300 6.800l3 3.600 5.600-8" stroke="#5dc83e" stroke-width="2.400" fill="none"/></svg>
<div class="a" style="left:9px;top:655px;width:280px;height:8px;background:#e6eaf1;"></div>
<div class="a" style="left:9px;top:655px;width:280px;height:8px;overflow:hidden"><div class="t" style="left:11px;top:3.500px;font-size:11px;line-height:14px;color:#2e2e3e">Number Format</div></div>
<div class="a" style="left:289px;top:425px;width:17px;height:238px;background:#fdfdfd;"></div>
<div class="a" style="left:290px;top:441px;width:16px;height:155px;background:#dcdcdc;"></div>
<div class="a" style="left:290px;top:425px;width:16px;height:16px;background:#fff;"></div>
<div class="a" style="left:289px;top:425px;width:1px;height:238px;background:#808080;"></div>
<svg style="left:294px;top:431px" width="7.400" height="4.200" viewBox="0 0 8 5"><path d="M0 5h8l-4-5z" fill="#333"/></svg>
<svg style="left:294px;top:652.800px" width="7.400" height="4.200" viewBox="0 0 8 5"><path d="M0 0h8l-4 5z" fill="#333"/></svg>
<div class="a" style="left:316px;top:147px;width:926px;height:522px;background:#fcfcfc;"></div>
<div class="a" style="left:316px;top:147px;width:926px;height:1px;background:#a9b0be;"></div>
<div class="a" style="left:316px;top:147px;width:1px;height:522px;background:#b4b9c4;"></div>
<div class="a" style="left:1240px;top:147px;width:1px;height:522px;background:#9a9a9a;"></div>
<div class="a" style="left:1241px;top:147px;width:1px;height:522px;background:#6a6a6a;"></div>
<div class="a" style="left:316px;top:667px;width:926px;height:1px;background:#9a9a9a;"></div>
<div class="a" style="left:316px;top:668px;width:926px;height:1px;background:#6a6a6a;"></div>
<div class="a" style="left:543px;top:147px;width:699px;height:1px;background:#c3c8d2;"></div>
<div class="a" style="left:316px;top:119px;width:104px;height:30px;background:#fcfcfc;border-top:1px solid #a9b0be;border-left:1px solid #b4b9c4;border-radius:4px 3px 0 0;"></div>
<div class="a" style="left:418px;top:120px;width:2px;height:29px;background:#757575;border-radius:0 2px 0 0;"></div>
<svg style="left:325.5px;top:126px" width="15" height="16" viewBox="0 0 15 16"><path d="M7.500 0l7.500 3.600-7.500 3.800-7.500-3.800z" fill="#8ccbf2"/><path d="M0 3.600l7.500 3.800v8.600l-7.500-4z" fill="#5fb0e5"/><path d="M15 3.600l-7.500 3.800v8.600l7.500-4z" fill="#336e99"/></svg>
<div class="t" style="letter-spacing:0.320px;left:350.5px;top:127.19px;font-size:11px;color:#4a9fd8;line-height:14px;height:14px;">Matrix1</div>
<svg style="left:398.5px;top:130px" width="9.5" height="9.5" viewBox="0 0 10 10"><path d="M0.500 0.500l9 9M9.500 0.500l-9 9" stroke="#222" stroke-width="1.36842" fill="none"/></svg>
<div class="a" style="left:420px;top:121px;width:124px;height:26px;background:#fff;border-top:1px solid #a9b0be;border-radius:0 3px 0 0;"></div>
<div class="a" style="left:542px;top:122px;width:2px;height:25px;background:#757575;border-radius:0 2px 0 0;"></div>
<div class="a" style="left:420px;top:147px;width:124px;height:1px;background:#a0a8b8;"></div>
<svg style="left:426.5px;top:126px" width="15" height="16" viewBox="0 0 15 16"><path d="M7.500 .700l6.800 3.400v7.800l-6.800 3.400-6.800-3.400v-7.800zM.700 4.100l6.800 3.500 6.800-3.500M7.500 7.600v7.700" fill="none" stroke="#336e99" stroke-width="1.300" stroke-linejoin="round"/></svg>
<div class="t" style="letter-spacing:0.339px;left:451.3px;top:127.19px;font-size:11px;color:#2e2e3e;line-height:14px;height:14px;">Matrix1 - View1</div>
<div class="a" style="left:622px;top:159px;width:543px;height:340px;background:#fff;border:1px solid #9c9c9c;"></div>
<div class="a" style="left:320px;top:244px;width:845px;height:255px;background:#fff;border:1px solid #9c9c9c;"></div>
<div class="a" style="left:623px;top:160px;width:541px;height:338px;background:#fff;"></div>
<div class="a" style="left:321px;top:245px;width:843px;height:253px;background:#fff;"></div>
<div class="a" style="left:563px;top:159px;width:60px;height:86px;background:#fff;border:1px solid #9c9c9c;"></div>
<div class="a" style="left:563px;top:176px;width:60px;height:1px;background:#9c9c9c;"></div>
<div class="a" style="left:563px;top:193px;width:60px;height:1px;background:#9c9c9c;"></div>
<div class="a" style="left:563px;top:210px;width:60px;height:1px;background:#9c9c9c;"></div>
<div class="a" style="left:563px;top:227px;width:60px;height:1px;background:#9c9c9c;"></div>
<div class="a" style="left:564px;top:211px;width:58px;height:16px;background:#e6ebf3;"></div>
<div class="t" style="letter-spacing:-0.234px;left:586px;top:161.19px;font-size:11px;color:#2e2e3e;line-height:14px;height:14px;">A1</div>
<div class="t" style="letter-spacing:-0.531px;left:586px;top:178.19px;font-size:11px;color:#2e2e3e;line-height:14px;height:14px;">C1</div>
<div class="t" style="letter-spacing:-0.531px;left:586px;top:195.19px;font-size:11px;color:#2e2e3e;line-height:14px;height:14px;">D1</div>
<div class="t" style="letter-spacing:-0.234px;left:586px;top:212.19px;font-size:11px;color:#2e2e3e;line-height:14px;height:14px;">E1</div>
<div class="a" style="left:320px;top:227px;width:244px;height:18px;background:#fff;border:1px solid #9c9c9c;"></div>
<div class="a" style="left:379px;top:227px;width:1px;height:18px;background:#9c9c9c;"></div>
<div class="a" style="left:438px;top:227px;width:1px;height:18px;background:#9c9c9c;"></div>
<div class="a" style="left:497px;top:227px;width:1px;height:18px;background:#9c9c9c;"></div>
<div class="a" style="left:498px;top:228px;width:65px;height:16px;background:#e6ebf3;"></div>
<div class="t" style="letter-spacing:-0.484px;left:343.5px;top:229.19px;font-size:11px;color:#2e2e3e;line-height:14px;height:14px;">B1</div>
<div class="t" style="letter-spacing:-0.172px;left:402.5px;top:229.19px;font-size:11px;color:#2e2e3e;line-height:14px;height:14px;">F1</div>
<div class="t" style="letter-spacing:-0.594px;left:461px;top:229.19px;font-size:11px;color:#2e2e3e;line-height:14px;height:14px;">G1</div>
<div class="t" style="letter-spacing:-0.438px;left:501.4px;top:229.19px;font-size:11px;color:#55556a;line-height:14px;height:14px;">SOFTPEDIA</div>
<div class="a" style="left:564px;top:228px;width:59px;height:17px;background:#fff;border:1px solid #26263a;"></div>
<div class="a" style="left:565px;top:229px;width:57px;height:15px;overflow:hidden">
<div class="t" style="left:2.7px;top:0.19px;font-size:11px;color:#2e2e3e;line-height:14px;height:14px;">Test Softpedia</div>
</div>
<div class="a" style="left:1171px;top:160px;width:62px;height:21px;background:#fff;border:1px solid #a3a3a3;border-radius:3px;"></div>
<div class="a" style="left:1180px;top:164px;width:1px;height:13px;background:repeating-linear-gradient(#555 0 1px,transparent 1px 2px)"></div>
<div class="a" style="left:1182px;top:164px;width:1px;height:13px;background:repeating-linear-gradient(#555 0 1px,transparent 1px 2px)"></div>
<div class="t" style="left:1190.5px;top:163.19px;font-size:11px;color:#2e2e3e;line-height:14px;height:14px;">A</div>
<div class="a" style="left:1171px;top:187px;width:62px;height:21px;background:#fff;border:1px solid #a3a3a3;border-radius:3px;"></div>
<div class="a" style="left:1180px;top:191px;width:1px;height:13px;background:repeating-linear-gradient(#555 0 1px,transparent 1px 2px)"></div>
<div class="a" style="left:1182px;top:191px;width:1px;height:13px;background:repeating-linear-gradient(#555 0 1px,transparent 1px 2px)"></div>
<div class="t" style="left:1190.5px;top:190.19px;font-size:11px;color:#2e2e3e;line-height:14px;height:14px;">C</div>
<div class="a" style="left:1171px;top:214px;width:62px;height:21px;background:#fff;border:1px solid #a3a3a3;border-radius:3px;"></div>
<div class="a" style="left:1180px;top:218px;width:1px;height:13px;background:repeating-linear-gradient(#555 0 1px,transparent 1px 2px)"></div>
<div class="a" style="left:1182px;top:218px;width:1px;height:13px;background:repeating-linear-gradient(#555 0 1px,transparent 1px 2px)"></div>
<div class="t" style="left:1190.5px;top:217.19px;font-size:11px;color:#2e2e3e;line-height:14px;height:14px;">D</div>
<div class="a" style="left:1171px;top:241px;width:62px;height:21px;background:#fff;border:1px solid #a3a3a3;border-radius:3px;"></div>
<div class="a" style="left:1180px;top:245px;width:1px;height:13px;background:repeating-linear-gradient(#555 0 1px,transparent 1px 2px)"></div>
<div class="a" style="left:1182px;top:245px;width:1px;height:13px;background:repeating-linear-gradient(#555 0 1px,transparent 1px 2px)"></div>
<div class="t" style="left:1190.5px;top:244.19px;font-size:11px;color:#2e2e3e;line-height:14px;height:14px;">E</div>
<div class="a" style="left:1175px;top:271px;width:12px;height:12px;background:#fff;border:1px solid #8e8e8e;border-radius:2px;"></div>
<div class="a" style="left:1178px;top:276.5px;width:6px;height:1px;background:#333;"></div>
<div class="a" style="left:1180.5px;top:274px;width:1px;height:6px;background:#333;"></div>
<div class="a" style="left:321px;top:505px;width:62px;height:21px;background:#fff;border:1px solid #a3a3a3;border-radius:3px;"></div>
<div class="a" style="left:330px;top:509px;width:1px;height:13px;background:repeating-linear-gradient(#555 0 1px,transparent 1px 2px)"></div>
<div class="a" style="left:332px;top:509px;width:1px;height:13px;background:repeating-linear-gradient(#555 0 1px,transparent 1px 2px)"></div>
<div class="t" style="left:340.5px;top:508.19px;font-size:11px;color:#2e2e3e;line-height:14px;height:14px;">B</div>
<div class="a" style="left:387px;top:505px;width:62px;height:21px;background:#fff;border:1px solid #a3a3a3;border-radius:3px;"></div>
<div class="a" style="left:396px;top:509px;width:1px;height:13px;background:repeating-linear-gradient(#555 0 1px,transparent 1px 2px)"></div>
<div class="a" style="left:398px;top:509px;width:1px;height:13px;background:repeating-linear-gradient(#555 0 1px,transparent 1px 2px)"></div>
<div class="t" style="left:406.5px;top:508.19px;font-size:11px;color:#2e2e3e;line-height:14px;height:14px;">F</div>
<div class="a" style="left:453px;top:505px;width:62px;height:21px;background:#fff;border:1px solid #a3a3a3;border-radius:3px;"></div>
<div class="a" style="left:462px;top:509px;width:1px;height:13px;background:repeating-linear-gradient(#555 0 1px,transparent 1px 2px)"></div>
<div class="a" style="left:464px;top:509px;width:1px;height:13px;background:repeating-linear-gradient(#555 0 1px,transparent 1px 2px)"></div>
<div class="t" style="left:472.5px;top:508.19px;font-size:11px;color:#2e2e3e;line-height:14px;height:14px;">G</div>
<div class="a" style="left:519px;top:505px;width:62px;height:21px;background:#fff;border:1px solid #a3a3a3;border-radius:3px;"></div>
<div class="a" style="left:528px;top:509px;width:1px;height:13px;background:repeating-linear-gradient(#555 0 1px,transparent 1px 2px)"></div>
<div class="a" style="left:530px;top:509px;width:1px;height:13px;background:repeating-linear-gradient(#555 0 1px,transparent 1px 2px)"></div>
<div class="t" style="left:538.5px;top:508.19px;font-size:11px;color:#2e2e3e;line-height:14px;height:14px;">H</div>
<div class="a" style="left:589.5px;top:509.5px;width:12px;height:12px;background:#fff;border:1px solid #8e8e8e;border-radius:2px;"></div>
<div class="a" style="left:592.5px;top:515px;width:6px;height:1px;background:#333;"></div>
<div class="a" style="left:595px;top:512.5px;width:1px;height:6px;background:#333;"></div>
<div class="a" style="left:770px;top:533px;width:16px;height:1px;background:repeating-linear-gradient(90deg,#8a8a8a 0 1px,transparent 1px 2px)"></div>
<div class="a" style="left:770px;top:535px;width:16px;height:1px;background:repeating-linear-gradient(90deg,#8a8a8a 0 1px,transparent 1px 2px)"></div>
<div class="a" style="left:320px;top:538px;width:917px;height:126px;background:#fcfcfc;border:1px solid #8a8a8a;"></div>
<div class="a" style="left:321px;top:539px;width:915px;height:26px;background:#fff;"></div>
<div class="a" style="left:321px;top:565px;width:915px;height:1px;background:#a8a8a8;"></div>
<div class="a" style="left:321px;top:566px;width:915px;height:27px;background:#eeeeee;"></div>
<div class="a" style="left:321px;top:593px;width:915px;height:1px;background:#d6d6d6;"></div>
<div class="t" style="letter-spacing:-0.355px;left:326.4px;top:545.19px;font-size:11px;color:#2e2e3e;line-height:14px;height:14px;">Formulas</div>
<div class="a" style="left:389px;top:545px;width:16px;height:15px;background:#4355a5;"></div>
<div class="t" style="left:394.8px;top:544.96px;font-size:10.5px;color:#fff;line-height:14px;height:14px;font-family:'Liberation Serif',serif;font-weight:bold;font-style:italic;">f</div>
<div class="t" style="left:430.3px;top:545.19px;font-size:11px;color:#6e6e6e;line-height:14px;height:14px;">=</div>
<div class="t" style="left:456px;top:545.19px;font-size:11px;color:#6e6e6e;line-height:14px;height:14px;">+</div>
<div class="t" style="left:481.6px;top:545.19px;font-size:11px;color:#6e6e6e;line-height:14px;height:14px;">-</div>
<div class="t" style="left:505.5px;top:545.19px;font-size:11px;color:#6e6e6e;line-height:14px;height:14px;">*</div>
<div class="t" style="left:531px;top:545.19px;font-size:11px;color:#6e6e6e;line-height:14px;height:14px;">/</div>
<div class="t" style="left:556px;top:545.19px;font-size:11px;color:#6e6e6e;line-height:14px;height:14px;">^</div>
<div class="t" style="left:587px;top:545.19px;font-size:11px;color:#a0a0a0;line-height:14px;height:14px;">..</div>
<div class="t" style="left:610px;top:545.19px;font-size:11px;color:#a0a0a0;line-height:14px;height:14px;">:</div>
<div class="t" style="left:630px;top:545.19px;font-size:11px;color:#a0a0a0;line-height:14px;height:14px;">::</div>
<div class="t" style="left:652.4px;top:545.19px;font-size:11px;color:#a0a0a0;line-height:14px;height:14px;">(</div>
<div class="t" style="left:675px;top:545.19px;font-size:11px;color:#a0a0a0;line-height:14px;height:14px;">)</div>
<div class="a" style="left:575px;top:542px;width:1px;height:21px;background:#6e6e6e;"></div>
<div class="a" style="left:692px;top:542px;width:1px;height:21px;background:#6e6e6e;"></div>
<div class="a" style="left:752px;top:542px;width:1px;height:21px;background:#6e6e6e;"></div>
<div class="t" style="letter-spacing:-0.394px;left:704.6px;top:545.19px;font-size:11px;color:#777;line-height:14px;height:14px;">In</div>
<div class="t" style="letter-spacing:-0.177px;left:724px;top:545.19px;font-size:11px;color:#777;line-height:14px;height:14px;">Skip</div>
<div class="t" style="letter-spacing:-0.262px;left:761.4px;top:545.19px;font-size:11px;color:#777;line-height:14px;height:14px;">[THIS]</div>
<div class="t" style="letter-spacing:-0.542px;left:799.7px;top:545.19px;font-size:11px;color:#777;line-height:14px;height:14px;">[FIRST]</div>
<div class="t" style="letter-spacing:-0.646px;left:842.8px;top:545.19px;font-size:11px;color:#777;line-height:14px;height:14px;">[PREV]</div>
<div class="t" style="letter-spacing:-0.342px;left:883.4px;top:545.19px;font-size:11px;color:#777;line-height:14px;height:14px;">[NEXT]</div>
<div class="t" style="letter-spacing:-0.354px;left:925.5px;top:545.19px;font-size:11px;color:#777;line-height:14px;height:14px;">[LAST]</div>
<div class="t" style="letter-spacing:-0.463px;left:968.6px;top:545.19px;font-size:11px;color:#777;line-height:14px;height:14px;">[]</div>
<div class="t" style="letter-spacing:-0.555px;left:346px;top:573.34px;font-size:13px;color:#1e0a1e;line-height:14px;height:14px;font-family:'Liberation Mono',monospace;">1.</div>
<div class="t" style="letter-spacing:-0.843px;left:370px;top:573.34px;font-size:13px;color:#a9a3a9;line-height:14px;height:14px;font-family:'Liberation Mono',monospace;">Enter the text of your formula here.</div>
<svg style="left:7px;top:674px" width="14" height="16" viewBox="0 0 14 16"><path d="M7 .500a1 1 0 0 1 1 1v.600c2.300.600 3.600 2.500 3.600 5 0 3 .800 4.200 2 5.200v.900h-13.200v-.900c1.200-1 2-2.200 2-5.200 0-2.500 1.300-4.400 3.600-5v-.600a1 1 0 0 1 1-1z" fill="#55c14f"/><path d="M5.600 14h2.800a1.400 1.400 0 0 1-2.800 0z" fill="#55c14f"/></svg>
<svg style="left:1222.500px;top:674.700px" width="16" height="16" viewBox="-8 -8 16 16"><g fill="#92928c"><path d="M-.350 -2.300L-.850 -7.400L.850 -7.400L.350 -2.300z" transform="rotate(0)"/><path d="M-.350 -2.300L-.850 -7.400L.850 -7.400L.350 -2.300z" transform="rotate(22.5)"/><path d="M-.350 -2.300L-.850 -7.400L.850 -7.400L.350 -2.300z" transform="rotate(45)"/><path d="M-.350 -2.300L-.850 -7.400L.850 -7.400L.350 -2.300z" transform="rotate(67.5)"/><path d="M-.350 -2.300L-.850 -7.400L.850 -7.400L.350 -2.300z" transform="rotate(90)"/><path d="M-.350 -2.300L-.850 -7.400L.850 -7.400L.350 -2.300z" transform="rotate(112.5)"/><path d="M-.350 -2.300L-.850 -7.400L.850 -7.400L.350 -2.300z" transform="rotate(135)"/><path d="M-.350 -2.300L-.850 -7.400L.850 -7.400L.350 -2.300z" transform="rotate(157.5)"/><path d="M-.350 -2.300L-.850 -7.400L.850 -7.400L.350 -2.300z" transform="rotate(180)"/><path d="M-.350 -2.300L-.850 -7.400L.850 -7.400L.350 -2.300z" transform="rotate(202.5)"/><path d="M-.350 -2.300L-.850 -7.400L.850 -7.400L.350 -2.300z" transform="rotate(225)"/><path d="M-.350 -2.300L-.850 -7.400L.850 -7.400L.350 -2.300z" transform="rotate(247.5)"/><path d="M-.350 -2.300L-.850 -7.400L.850 -7.400L.350 -2.300z" transform="rotate(270)"/><path d="M-.350 -2.300L-.850 -7.400L.850 -7.400L.350 -2.300z" transform="rotate(292.5)"/><path d="M-.350 -2.300L-.850 -7.400L.850 -7.400L.350 -2.300z" transform="rotate(315)"/><path d="M-.350 -2.300L-.850 -7.400L.850 -7.400L.350 -2.300z" transform="rotate(337.5)"/></g></svg>
<svg style="left:8px;top:7px" width="16" height="15" viewBox="0 0 16 15"><path d="M7 1.500l5 2.700v5.600l-5 3-5-3v-5.600z" fill="#fff" stroke="#cdcdcd" stroke-width="1.700"/><path d="M.700 3.500l2.200 1v5l4.100 2.300v2.300l-6.300-3.400z" fill="#1e2230"/><circle cx="6.300" cy="6.400" r="1.500" fill="#e8213a"/><path d="M10.500 10l4.600 2.600" stroke="#b5b5b5" stroke-width="1.900"/></svg>
<div class="a" style="left:1126px;top:15px;width:10px;height:1px;background:#1e0a1e;"></div>
<div class="a" style="left:1171px;top:10px;width:10px;height:10px;border:1px solid #1e0a1e;"></div>
<svg style="left:1217px;top:10px" width="10" height="10" viewBox="0 0 10 10"><path d="M0 0l10 10M10 0l-10 10" stroke="#1e0a1e" stroke-width="1.100" fill="none"/></svg>
<div class="t" style="letter-spacing:-2.444px;left:1050.5px;top:638.74px;font-size:32.5px;color:rgba(255,255,255,.88);line-height:34px;height:34px;font-weight:bold;text-shadow:0 1px 3px rgba(0,0,0,.13),0 0 1px rgba(0,0,0,.06);">SOFTPEDIA</div>
<div class="t" style="left:1214.5px;top:638.88px;font-size:9px;color:#fff;line-height:14px;height:14px;text-shadow:0 0 2px rgba(0,0,0,.18);">®</div>
<div class="a" style="left:0px;top:0px;width:1246px;height:1px;background:#686868;"></div>
<div class="a" style="left:0px;top:0px;width:1px;height:693px;background:#6c6c6c;"></div>
<div class="a" style="left:0px;top:692px;width:1246px;height:1px;background:#7a7a7a;"></div>
<div class="a" style="left:1245px;top:0px;width:1px;height:693px;background:#6a6a6a;"></div>
</body>
</html>
